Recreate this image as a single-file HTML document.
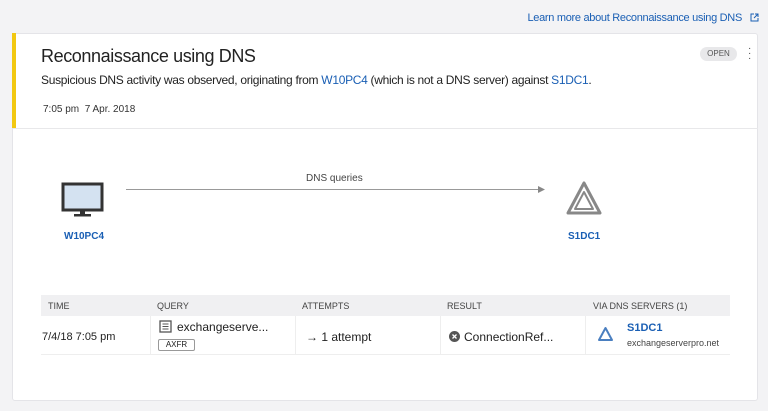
<!DOCTYPE html>
<html><head><style>
*{margin:0;padding:0;box-sizing:border-box}
body{width:768px;height:411px;background:#f3f3f5;font-family:"Liberation Sans",sans-serif;color:#222;position:relative;overflow:hidden}
.a{position:absolute;white-space:nowrap}
.blue{color:#1a5fb4}
.card{position:absolute;left:12px;top:33px;width:746px;height:368px;background:#fff;border:1px solid #e4e4e8;border-radius:3px}
.yb{position:absolute;left:12px;top:33px;width:4px;height:95px;background:#f2c811}
.th{font-size:9px;color:#444;top:301px}
.td{font-size:12px;top:330px}
</style></head><body>
<div class="a blue" style="right:26px;top:12px;font-size:11px;letter-spacing:-0.3px">Learn more about Reconnaissance using DNS</div>
<svg class="a" style="left:750px;top:13px" width="9" height="9" viewBox="0 0 9 9"><path d="M4 1H1v7h7V5M5 1h3v3M8 1L4 5" fill="none" stroke="#1a5fb4" stroke-width="1"/></svg>
<div class="card"></div>
<div class="yb"></div>
<div class="a" style="left:41px;top:46px;font-size:18px;letter-spacing:-0.4px">Reconnaissance using DNS</div>
<div class="a" style="left:41px;top:73px;font-size:12px;letter-spacing:-0.3px">Suspicious DNS activity was observed, originating from <span class="blue">W10PC4</span> (which is not a DNS server) against <span class="blue">S1DC1</span>.</div>
<div class="a" style="left:43px;top:104px;font-size:10px;color:#333">7:05 pm&nbsp;&nbsp;7 Apr. 2018</div>
<div class="a" style="left:700px;top:47px;width:37px;height:14px;border-radius:7px;background:#e8e8ea;font-size:8px;color:#555;text-align:center;line-height:14px">OPEN</div>
<div class="a" style="left:748px;top:46px;font-size:10px;line-height:5px;color:#444">·<br>·<br>·</div>
<div class="a" style="left:13px;top:128px;width:745px;height:1px;background:#e8e8ea"></div>
<svg class="a" style="left:61px;top:182px" width="43" height="36" viewBox="0 0 43 36"><rect x="2" y="2" width="39" height="26" fill="#d4e2f1" stroke="#333" stroke-width="3"/><rect x="19" y="28" width="5" height="5" fill="#333"/><rect x="13" y="32" width="17" height="2.5" fill="#333"/></svg>
<div class="a blue" style="left:64px;top:231px;font-size:10px;font-weight:bold">W10PC4</div>
<div class="a" style="left:126px;top:189px;width:414px;height:1px;background:#999"></div>
<svg class="a" style="left:538px;top:186px" width="7" height="7"><path d="M0 0L7 3.5L0 7z" fill="#888"/></svg>
<div class="a" style="left:306px;top:173px;font-size:10px;color:#444">DNS queries</div>
<svg class="a" style="left:565px;top:180px" width="38" height="36" viewBox="0 0 38 36"><path d="M19 3L35 33H3Z" fill="#fff" stroke="#888" stroke-width="3" stroke-linejoin="round"/><path d="M19 12L28 29H10Z" fill="#fff" stroke="#888" stroke-width="2" stroke-linejoin="round"/></svg>
<div class="a blue" style="left:568px;top:231px;font-size:10px;font-weight:bold">S1DC1</div>
<div class="a" style="left:41px;top:295px;width:689px;height:21px;background:#f0f0f2"></div>
<div class="a th" style="left:48px">TIME</div>
<div class="a th" style="left:157px">QUERY</div>
<div class="a th" style="left:302px">ATTEMPTS</div>
<div class="a th" style="left:447px">RESULT</div>
<div class="a th" style="left:593px">VIA DNS SERVERS (1)</div>
<div class="a" style="left:41px;top:354px;width:689px;height:1px;background:#eee"></div>
<div class="a" style="left:150px;top:316px;width:1px;height:38px;background:#eee"></div>
<div class="a" style="left:295px;top:316px;width:1px;height:38px;background:#eee"></div>
<div class="a" style="left:440px;top:316px;width:1px;height:38px;background:#eee"></div>
<div class="a" style="left:585px;top:316px;width:1px;height:38px;background:#eee"></div>
<div class="a td" style="left:42px;top:331px;font-size:11px">7/4/18 7:05 pm</div>
<svg class="a" style="left:159px;top:320px" width="13" height="13" viewBox="0 0 13 13"><rect x="1" y="1" width="11" height="11" fill="#fff" stroke="#555" stroke-width="1.3"/><path d="M3.5 4h6M3.5 6.5h6M3.5 9h6" stroke="#555"/></svg>
<div class="a" style="left:177px;top:320px;font-size:12px">exchangeserve...</div>
<div class="a" style="left:158px;top:339px;width:37px;height:12px;border:1px solid #999;border-radius:2px;font-size:8px;text-align:center;line-height:10px">AXFR</div>
<div class="a td" style="left:306px">→&nbsp;1 attempt</div>
<svg class="a" style="left:449px;top:331px" width="11" height="11"><circle cx="5.5" cy="5.5" r="5.5" fill="#555"/><path d="M3.5 3.5l4 4M7.5 3.5l-4 4" stroke="#fff" stroke-width="1.3"/></svg>
<div class="a td" style="left:464px">ConnectionRef...</div>
<svg class="a" style="left:597px;top:326px" width="17" height="16"><path d="M8.5 2L15 14H2Z" fill="none" stroke="#4a7fc0" stroke-width="2" stroke-linejoin="round"/></svg>
<div class="a blue" style="left:627px;top:322px;font-size:11px;font-weight:bold">S1DC1</div>
<div class="a" style="left:627px;top:338px;font-size:9px;color:#444">exchangeserverpro.net</div>
</body></html>
